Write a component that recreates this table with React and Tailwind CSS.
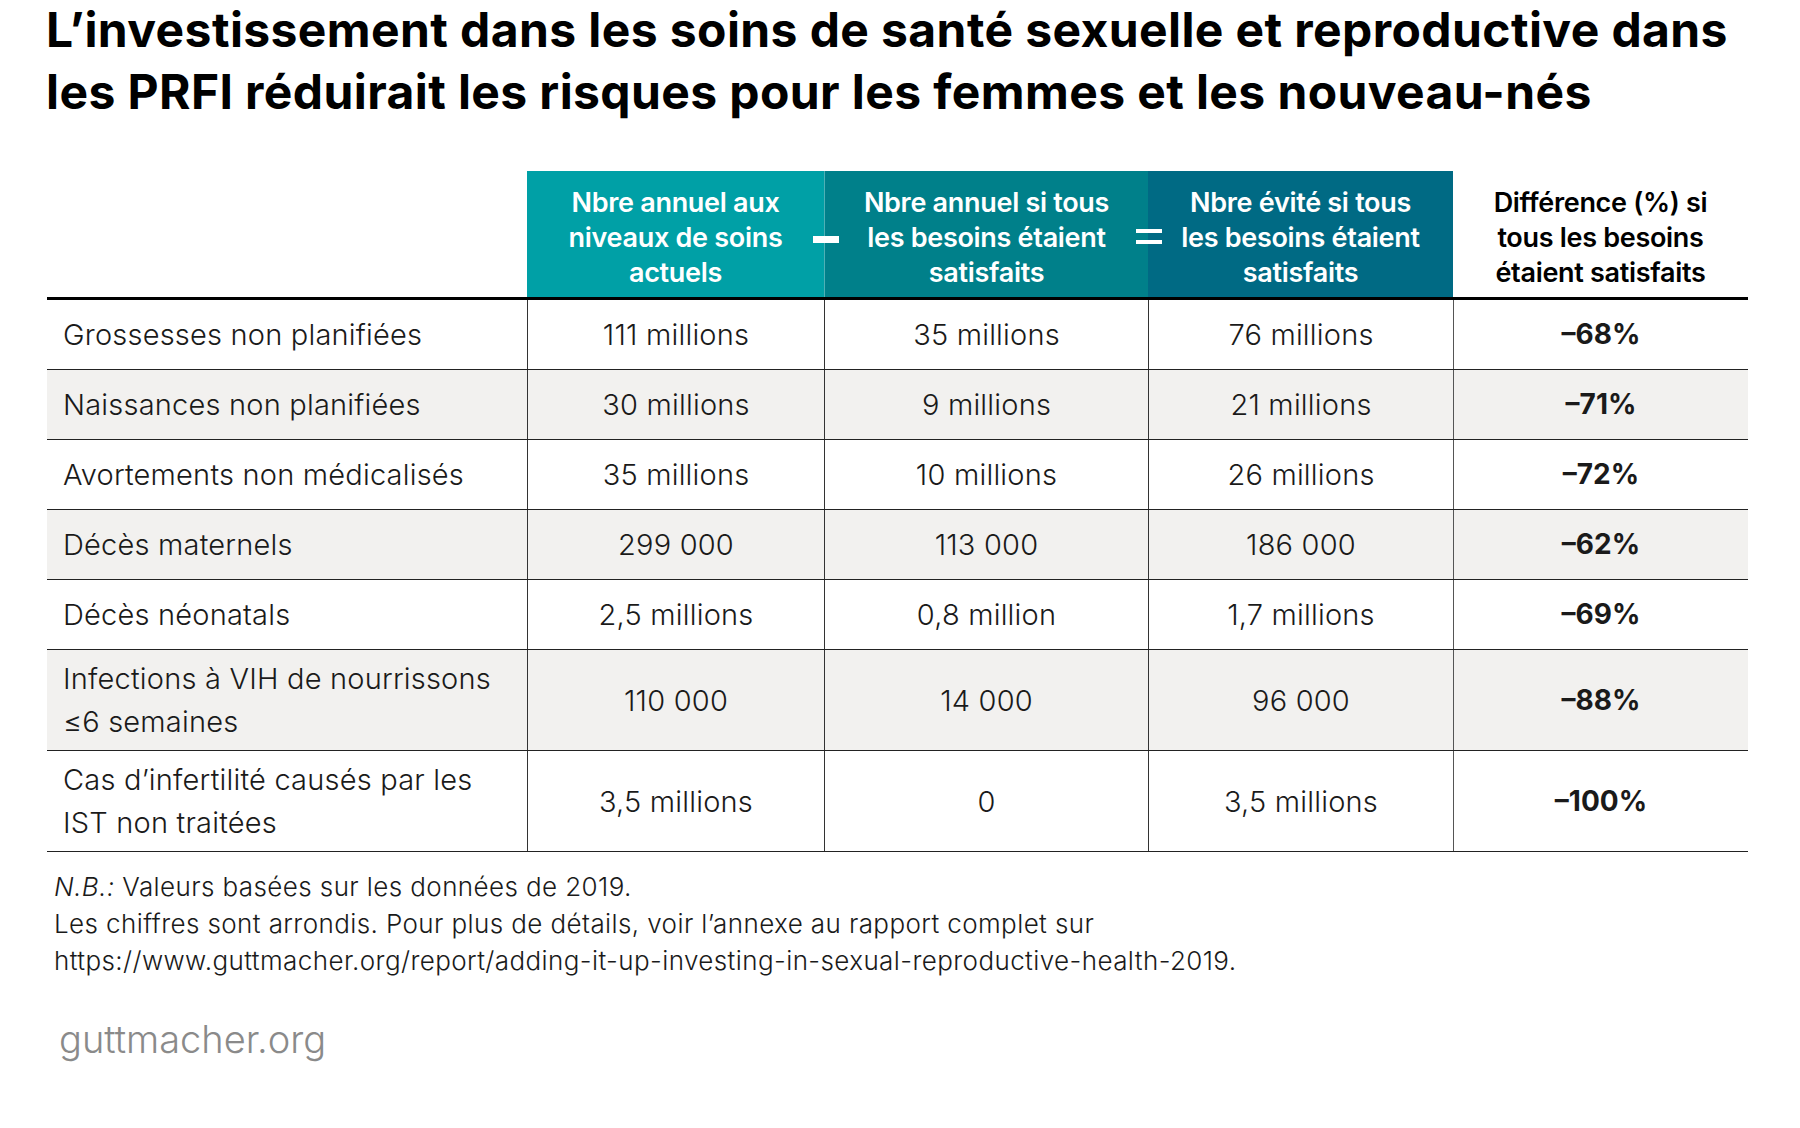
import React from 'react';

const rows = [
  { label: 'Grossesses non planifiées', a: '111 millions', b: '35 millions', c: '76 millions', d: '–68%' },
  { label: 'Naissances non planifiées', a: '30 millions', b: '9 millions', c: '21 millions', d: '–71%' },
  { label: 'Avortements non médicalisés', a: '35 millions', b: '10 millions', c: '26 millions', d: '–72%' },
  { label: 'Décès maternels', a: '299 000', b: '113 000', c: '186 000', d: '–62%' },
  { label: 'Décès néonatals', a: '2,5 millions', b: '0,8 million', c: '1,7 millions', d: '–69%' },
  { label: ['Infections à VIH de nourrissons', '≤6 semaines'], a: '110 000', b: '14 000', c: '96 000', d: '–88%' },
  { label: ['Cas d’infertilité causés par les', 'IST non traitées'], a: '3,5 millions', b: '0', c: '3,5 millions', d: '–100%' },
];

const cols = 'grid grid-cols-[480px_297px_324px_305px_295px]';

export default function App() {
  return (
    <div className="w-[1800px] h-[1128px] bg-white text-[#1a1a1a] font-['Inter','Lato',sans-serif] overflow-hidden">
      <h1 className="pl-[46px] flex flex-col gap-[3px] text-[48px] leading-[59px] tracking-[0.4px] font-bold text-black">
        <span>L’investissement dans les soins de santé sexuelle et reproductive dans</span>
        <span>les PRFI réduirait les risques pour les femmes et les nouveau-nés</span>
      </h1>

      <div className="ml-[47px] mt-[50px] w-[1701px]">
        {/* header */}
        <div className={`${cols} h-[129px] border-b-[3px] border-black relative`}>
          <div />
          <div className="bg-[#00a0a6] text-white font-semibold text-[27px] leading-[35px] pt-[6px] flex items-center justify-center text-center tracking-[-0.3px]">
            <span>Nbre annuel aux<br />niveaux de soins<br />actuels</span>
          </div>
          <div className="bg-[#00808a] text-white font-semibold text-[27px] leading-[35px] pt-[6px] flex items-center justify-center text-center border-l border-[#4fb0b5] tracking-[-0.3px]">
            <span>Nbre annuel si tous<br />les besoins étaient<br />satisfaits</span>
          </div>
          <div className="bg-[#006a84] text-white font-semibold text-[27px] leading-[35px] pt-[6px] flex items-center justify-center text-center tracking-[-0.3px]">
            <span>Nbre évité si tous<br />les besoins étaient<br />satisfaits</span>
          </div>
          <div className="text-black font-semibold text-[27px] leading-[35px] pt-[6px] flex items-center justify-center text-center tracking-[-0.3px]">
            <span>Différence (%) si<br />tous les besoins<br />étaient satisfaits</span>
          </div>
          {/* operators */}
          <div className="absolute left-[766px] top-[65px] w-[26px] h-[7px] bg-white" />
          <div className="absolute left-[1089px] top-[58px] w-[26px] flex flex-col gap-[7px]">
            <div className="h-[4px] bg-white" />
            <div className="h-[4px] bg-white" />
          </div>
        </div>

        {/* body */}
        {rows.map((r, i) => {
          const tall = Array.isArray(r.label);
          return (
            <div
              key={i}
              className={`${cols} ${tall ? 'h-[101px]' : 'h-[70px]'} ${i % 2 === 1 ? 'bg-[#f2f1ef]' : 'bg-white'} border-b-[1.5px] border-[#222] text-[29px] leading-[43px] tracking-[0.2px] font-light`}
            >
              <div className="pl-[16px] flex items-center">
                {tall ? (
                  <span>{r.label[0]}<br />{r.label[1]}</span>
                ) : (
                  <span>{r.label}</span>
                )}
              </div>
              <div className="border-l-[1.5px] border-[#333] flex items-center justify-center">{r.a}</div>
              <div className="border-l-[1.5px] border-[#333] flex items-center justify-center">{r.b}</div>
              <div className="border-l-[1.5px] border-[#333] flex items-center justify-center">{r.c}</div>
              <div className="border-l-[1.5px] border-[#555] flex items-center justify-center font-bold tracking-normal text-[28px]">{r.d}</div>
            </div>
          );
        })}
      </div>

      <div className="ml-[54px] mt-[16px] text-[26px] leading-[37px] tracking-[0.4px] text-[#1a1a1a] font-light">
        <p><span className="italic">N.B.:</span> Valeurs basées sur les données de 2019.</p>
        <p>Les chiffres sont arrondis. Pour plus de détails, voir l’annexe au rapport complet sur</p>
        <p>https://www.guttmacher.org/report/adding-it-up-investing-in-sexual-reproductive-health-2019.</p>
      </div>

      <div className="ml-[59px] mt-[38px] text-[38px] leading-[44px] text-[#8a8a8a] font-light">guttmacher.org</div>
    </div>
  );
}
